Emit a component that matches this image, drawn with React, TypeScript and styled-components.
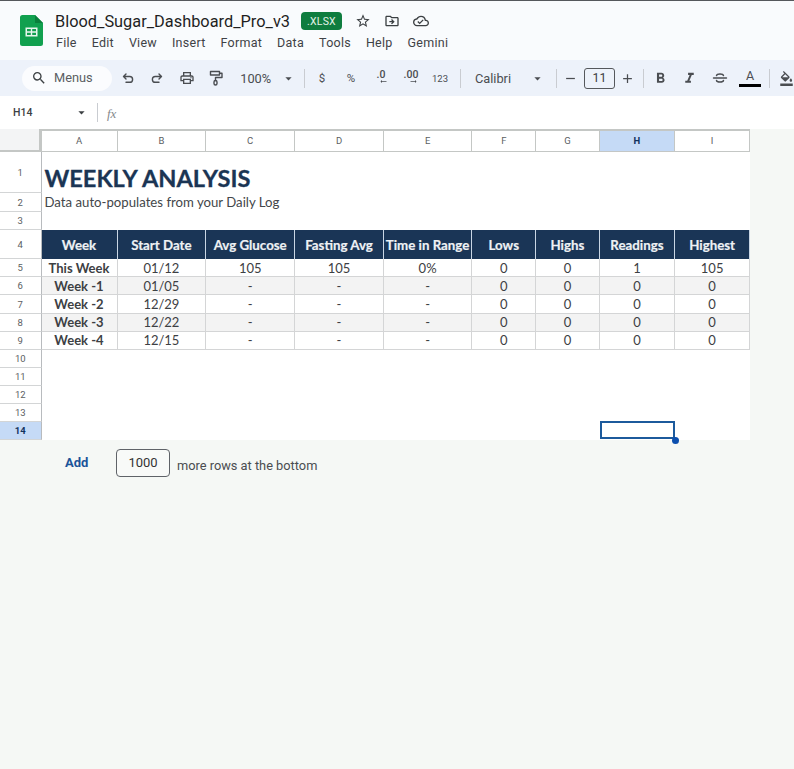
import React from "react";
import styled, { createGlobalStyle } from "styled-components";
import {
  MdSearch, MdOutlinePrint, MdArrowDropDown, MdStarBorder,
  MdOutlineDriveFileMove, MdOutlineCloudDone, MdRemove, MdAdd, MdFormatBold, MdFormatItalic,
  MdFormatColorFill, MdArrowRightAlt,
} from "react-icons/md";

const Global = createGlobalStyle`
  html, body { margin: 0; padding: 0; background: #f5f8f5; }
  body { width: 794px; height: 769px; overflow: hidden; font-family: Roboto, "Liberation Sans", sans-serif; color: #3c4043; }
`;

const Page = styled.div`
  width: 794px; height: 769px; display: flex; flex-direction: column; background: #f5f8f5; overflow: hidden;
  border-top: 1px solid #55585c; box-sizing: border-box;
`;
const TopBar = styled.header`
  height: 59px; background: #f9fbfd; display: flex; align-items: flex-start; padding: 14px 0 0 20px; box-sizing: border-box; gap: 12px;
`;
const Logo = styled.svg`width: 23px; height: 31px; flex: none;`;
const TitleBlock = styled.div`display: flex; flex-direction: column; margin-top: -4px;`;
const TitleRow = styled.div`display: flex; align-items: center; height: 20px;`;
const DocTitle = styled.div`font-size: 16.35px; color: #1f1f1f; width: 246px; white-space: nowrap;`;
const Badge = styled.div`
  width: 41px; height: 18px; border-radius: 4px; background: #0f7d3f; color: #e3f3e8; font-size: 10.5px;
  display: flex; align-items: center; justify-content: center; letter-spacing: .2px;
`;
const StatusIcon = styled.span<{ $w: number }>`
  width: ${p => p.$w}px; display: flex; justify-content: center; color: #3c4043; font-size: 16px;
`;
const MenuRow = styled.nav`display: flex; gap: 15px; margin-top: 3px; margin-left: 1px; font-size: 12.5px; letter-spacing: .26px; color: #3f4246; line-height: 18px;`;
const Toolbar = styled.div`
  height: 36px; background: #edf2fa; display: flex; align-items: center; padding-left: 22px; flex: none; white-space: nowrap; overflow: hidden;
  color: #4a4d51;
`;
const SearchPill = styled.div`
  width: 90px; height: 25px; border-radius: 13px; background: #fbfcfe; display: flex; align-items: center; padding: 0 0 1px 9px; gap: 7px;
  box-sizing: border-box; font-size: 12.8px; color: #5a5e63; flex: none;
`;
const Tool = styled.div<{ $w: number; $size?: number }>`
  width: ${p => p.$w}px; height: 25px; flex: none; display: flex; align-items: center; justify-content: center;
  font-size: ${p => p.$size ?? 12.8}px;
`;
const Sep = styled.div`width: 1px; height: 19px; background: #c9ccd1; flex: none;`;
const FontBox = styled.div`
  width: 31px; height: 21px; border: 1px solid #55585c; border-radius: 3px; box-sizing: border-box; display: flex; align-items: center; justify-content: center;
  font-size: 12.3px; flex: none; color: #3c4043;
`;
const ColorA = styled.div`
  display: flex; flex-direction: column; align-items: center; font-size: 12.5px; line-height: 14px; width: 22px;
  &::after { content: ""; width: 22px; height: 3px; background: #000; margin-top: 1px; }
`;
const Decimal = styled.div<{ $flip?: boolean }>`
  display: flex; flex-direction: column; align-items: center; font-size: 10.5px; line-height: 10px; font-weight: 500;
  svg { margin-top: -3px; margin-left: 5px; transform: ${p => (p.$flip ? "scaleX(-1)" : "none")}; }
`;
const FormulaBar = styled.div`
  height: 33px; background: #fff; display: flex; align-items: center; flex: none; box-sizing: border-box;
  font-size: 10.5px; color: #3c4043;
`;
const NameBox = styled.div`width: 74px; padding-left: 13px; box-sizing: border-box; flex: none; font-weight: 500;`;
const NameSpacer = styled.div`width: 8px; flex: none;`;
const FxMark = styled.div`
  width: 30px; padding-left: 9px; box-sizing: border-box; font-family: "Liberation Serif", serif; font-style: italic; color: #85888c; font-size: 13px; padding-top: 3px;
`;
const Sheet = styled.div`
  width: 750px; display: grid; flex: none; background: #fff;
  grid-template-columns: 41.5px 76px 88.8px 88.8px 88.8px 88.4px 64px 63.3px 75.7px 74.7px;
  grid-template-rows: 23px 41px 19px 18px 29.4px repeat(10, 18.06px);
`;
const Corner = styled.div`background: #f3f4f5; border-right: 3px solid #c4c7c5; border-bottom: 2px solid #c4c7c5; box-sizing: border-box;`;
const ColHead = styled.div<{ $active?: boolean }>`
  display: flex; align-items: center; justify-content: center; font-size: 9.5px; box-sizing: border-box; padding-bottom: 1px;
  color: ${p => (p.$active ? "#12325e" : "#5b5e62")}; font-weight: ${p => (p.$active ? 700 : 400)};
  background: ${p => (p.$active ? "#c5daf6" : "#fff")};
  border-right: 1px solid #c4c7c5; border-bottom: 1px solid #c4c7c5; border-top: 2px solid #c4c7c5;
`;
const RowHead = styled.div<{ $active?: boolean }>`
  display: flex; align-items: center; justify-content: center; font-size: 9.5px; box-sizing: border-box;
  color: ${p => (p.$active ? "#12325e" : "#5b5e62")}; font-weight: ${p => (p.$active ? 700 : 400)};
  background: ${p => (p.$active ? "#c5daf6" : "#fff")};
  border-right: 1px solid #b8bbbe; border-bottom: 1px solid #d3d5d6;
`;
const Span = styled.div`
  grid-column: 2 / -1; display: flex; align-items: center; padding-left: 3px; font-family: Lato, "Open Sans", sans-serif; background: #fff;
`;
const Title = styled(Span)`font-size: 23.6px; font-weight: 700; color: #1b3554; padding-top: 10px; box-sizing: border-box; -webkit-text-stroke: .3px #1b3554;`;
const Subtitle = styled(Span)`font-size: 13.2px; color: #43464a; padding-bottom: 1px; box-sizing: border-box;`;
const HeadCell = styled.div`
  background: #1a3556; color: #eef1f4; font: 700 13.3px Lato, "Open Sans", sans-serif; display: flex; align-items: center; justify-content: center;
  border-right: 1px solid #c9d6e4; box-sizing: border-box; white-space: nowrap; overflow: hidden; -webkit-text-stroke: .2px #eef1f4;
  &:last-child { border-right-color: #fff; }
`;
const Cell = styled.div<{ $alt?: boolean; $bold?: boolean }>`
  display: flex; align-items: center; justify-content: center; box-sizing: border-box;
  font: ${p => (p.$bold ? 700 : 400)} 13px Lato, "Open Sans", sans-serif; color: #3d4043;
  background: ${p => (p.$alt ? "#f3f3f3" : "#fff")}; border-right: 1px solid #d4d5d6; border-bottom: 1px solid #d4d5d6;
`;
const Blank = styled.div<{ $col: string }>`grid-column: ${p => p.$col}; background: #fff;`;
const Selected = styled.div`
  position: relative; border: 2px solid #1c5a9c; box-sizing: border-box; background: #fff; margin-top: -1px; margin-bottom: 1px;
  &::after { content: ""; position: absolute; right: -6px; bottom: -7px; width: 7px; height: 7px; border-radius: 50%; background: #0b4fae; }
`;
const AddBar = styled.div`
  display: flex; align-items: center; padding: 9px 0 0 65px; font-size: 12.8px; color: #4a4d50;
`;
const AddLink = styled.div`width: 51px; color: #1a5499; font-weight: 700; font-size: 13px; padding-bottom: 1px;`;
const RowsInput = styled.div`
  width: 54px; height: 28px; border: 1px solid #5f6368; border-radius: 4px; box-sizing: border-box; background: #f8faf8;
  display: flex; align-items: center; justify-content: center; font-size: 13px; color: #333;
`;
const AddText = styled.div`margin-left: 7px; padding-top: 6px;`;

const LineIcon = styled.svg`width: 16px; height: 16px; fill: none; stroke: currentColor; stroke-width: 1.4; stroke-linecap: round; stroke-linejoin: round;`;

const menus = ["File", "Edit", "View", "Insert", "Format", "Data", "Tools", "Help", "Gemini"];
const cols = ["A", "B", "C", "D", "E", "F", "G", "H", "I"];
const heads = ["Week", "Start Date", "Avg Glucose", "Fasting Avg", "Time in Range", "Lows", "Highs", "Readings", "Highest"];
const rows = [
  ["This Week", "01/12", "105", "105", "0%", "0", "0", "1", "105"],
  ["Week -1", "01/05", "-", "-", "-", "0", "0", "0", "0"],
  ["Week -2", "12/29", "-", "-", "-", "0", "0", "0", "0"],
  ["Week -3", "12/22", "-", "-", "-", "0", "0", "0", "0"],
  ["Week -4", "12/15", "-", "-", "-", "0", "0", "0", "0"],
];

export default function App() {
  return (
    <Page>
      <Global />
      <TopBar>
        <Logo viewBox="0 0 23 31">
          <path d="M2.5 0H15l8 8v20.5a2.5 2.5 0 0 1-2.5 2.5h-18A2.5 2.5 0 0 1 0 28.5v-26A2.5 2.5 0 0 1 2.5 0z" fill="#11a04f" />
          <path d="M15 0l8 8h-8z" fill="#0b7f3c" />
          <path d="M5.5 12.5h12v9h-12z M7 14v2.3h3.8V14z M12.2 14v2.3H16V14z M7 17.7V20h3.8v-2.3z M12.2 17.7V20H16v-2.3z" fill="#e8f6ee" fillRule="evenodd" />
        </Logo>
        <TitleBlock>
          <TitleRow>
            <DocTitle>Blood_Sugar_Dashboard_Pro_v3</DocTitle>
            <Badge>.XLSX</Badge>
            <StatusIcon $w={42}><MdStarBorder /></StatusIcon>
            <StatusIcon $w={16}><MdOutlineDriveFileMove /></StatusIcon>
            <StatusIcon $w={42}><MdOutlineCloudDone /></StatusIcon>
          </TitleRow>
          <MenuRow>{menus.map(m => <span key={m}>{m}</span>)}</MenuRow>
        </TitleBlock>
      </TopBar>
      <Toolbar>
        <SearchPill><MdSearch size={16} color="#3c4043" />Menus</SearchPill>
        <Tool $w={1.5} />
        <Tool $w={29.3}>
          <LineIcon viewBox="0 0 16 16"><path d="M6 4 3.5 6.5 6 9M3.5 6.5h6.2a2.9 2.9 0 0 1 0 5.8H6" /></LineIcon>
        </Tool>
        <Tool $w={29.3}>
          <LineIcon viewBox="0 0 16 16"><path d="M10 4l2.5 2.5L10 9M12.5 6.5H6.3a2.9 2.9 0 0 0 0 5.8H10" /></LineIcon>
        </Tool>
        <Tool $w={29.3} $size={16}><MdOutlinePrint /></Tool>
        <Tool $w={29.3}>
          <LineIcon viewBox="0 0 16 16"><path d="M2.5 1.5h9v3.5h-9zM11.500 3.200h2.500v4.300H7.500v3" /><rect x="6" y="10.500" width="3" height="4.500" rx="1.500" /></LineIcon>
        </Tool>
        <Tool $w={50}>100%</Tool>
        <Tool $w={15} $size={15}><MdArrowDropDown /></Tool>
        <Tool $w={8.3} />
        <Sep />
        <Tool $w={34} $size={11.5}>$</Tool>
        <Tool $w={24} $size={11.5}>%</Tool>
        <Tool $w={36}><Decimal $flip>.0<MdArrowRightAlt size={9} /></Decimal></Tool>
        <Tool $w={24}><Decimal>.00<MdArrowRightAlt size={9} /></Decimal></Tool>
        <Tool $w={34} $size={9.5}>123</Tool>
        <Tool $w={3} />
        <Sep />
        <Tool $w={64}>Calibri</Tool>
        <Tool $w={26} $size={15}><MdArrowDropDown /></Tool>
        <Tool $w={5} />
        <Sep />
        <Tool $w={27} $size={15}><MdRemove /></Tool>
        <FontBox>11</FontBox>
        <Tool $w={26} $size={15}><MdAdd /></Tool>
        <Tool $w={2} />
        <Sep />
        <Tool $w={34} $size={17}><MdFormatBold /></Tool>
        <Tool $w={24} $size={17}><MdFormatItalic /></Tool>
        <Tool $w={36}>
          <LineIcon viewBox="0 0 16 16"><path d="M1.500 8h13M4.500 5.500C5 3.500 11 3.500 11.500 5.500M4.500 10.500C5 12.500 11 12.500 11.500 10.500" /></LineIcon>
        </Tool>
        <Tool $w={24}><ColorA>A</ColorA></Tool>
        <Tool $w={7} />
        <Sep />
        <Tool $w={34} $size={15}><MdFormatColorFill /></Tool>
      </Toolbar>
      <FormulaBar>
        <NameBox>H14</NameBox>
        <MdArrowDropDown size={15} />
        <NameSpacer />
        <Sep />
        <FxMark>fx</FxMark>
      </FormulaBar>
      <Sheet>
        <Corner />
        {cols.map(c => <ColHead key={c} $active={c === "H"}>{c}</ColHead>)}
        <RowHead>1</RowHead><Title>WEEKLY ANALYSIS</Title>
        <RowHead>2</RowHead><Subtitle>Data auto-populates from your Daily Log</Subtitle>
        <RowHead>3</RowHead><Blank $col="2 / -1" />
        <RowHead>4</RowHead>
        {heads.map(h => <HeadCell key={h}>{h}</HeadCell>)}
        {rows.map((r, i) => (
          <React.Fragment key={r[0]}>
            <RowHead>{i + 5}</RowHead>
            {r.map((v, j) => <Cell key={j} $alt={i % 2 === 1} $bold={j === 0}>{v}</Cell>)}
          </React.Fragment>
        ))}
        {[10, 11, 12, 13].map(n => (
          <React.Fragment key={n}>
            <RowHead>{n}</RowHead>
            <Blank $col="2 / -1" />
          </React.Fragment>
        ))}
        <RowHead $active>14</RowHead>
        <Blank $col="2 / 9" />
        <Selected />
        <Blank $col="10 / 11" />
      </Sheet>
      <AddBar>
        <AddLink>Add</AddLink>
        <RowsInput>1000</RowsInput>
        <AddText>more rows at the bottom</AddText>
      </AddBar>
    </Page>
  );
}
